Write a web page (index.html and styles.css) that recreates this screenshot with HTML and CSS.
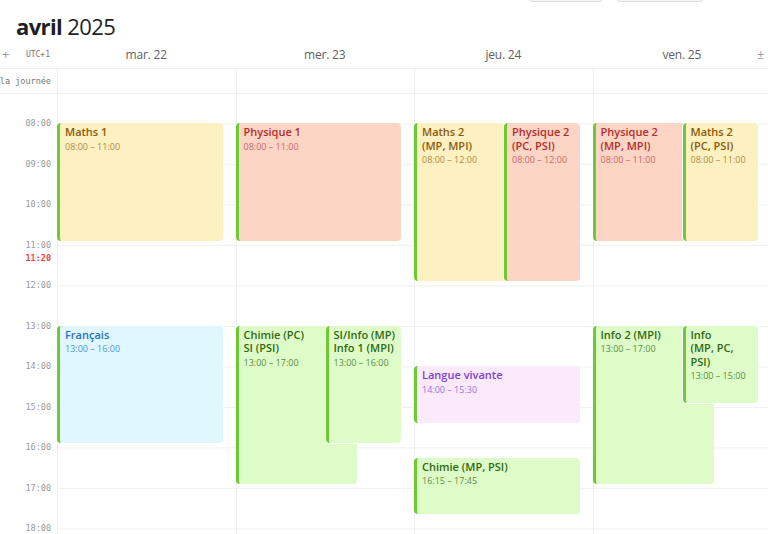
FILE: index.html
```html
<!DOCTYPE html>
<html lang="fr">
<head>
    <meta charset="UTF-8">
    <meta name="viewport" content="width=device-width, initial-scale=1.0">
    <title>Emploi du temps</title>
    <link rel="stylesheet" href="styles.css">
</head>
<body>
    <div class="calendar">
        <!-- Title + view buttons -->
        <div class="toolbar">
            <h1><strong>avril</strong> 2025</h1>
            <div class="view-buttons">
                <button class="btn-a"></button>
                <button class="btn-b"></button>
            </div>
        </div>

        <!-- Day names -->
        <div class="day-header">
            <div class="gutter-head">
                <span class="add">+</span>
                <span class="tz">UTC+1</span>
            </div>
            <div class="day-name">mar. 22</div>
            <div class="day-name">mer. 23</div>
            <div class="day-name">jeu. 24</div>
            <div class="day-name">ven. 25</div>
            <span class="zoom-toggle">±</span>
        </div>

        <!-- All day row -->
        <div class="allday-row">
            <div class="allday-label">Toute la journée</div>
            <div class="allday-cell"></div>
            <div class="allday-cell"></div>
            <div class="allday-cell"></div>
            <div class="allday-cell"></div>
        </div>

        <!-- Time grid -->
        <div class="time-grid">
            <div class="gutter">
                <div class="hour"><span>08:00</span></div>
                <div class="hour"><span>09:00</span></div>
                <div class="hour"><span>10:00</span></div>
                <div class="hour"><span>11:00</span><span class="now">11:20</span></div>
                <div class="hour"><span>12:00</span></div>
                <div class="hour"><span>13:00</span></div>
                <div class="hour"><span>14:00</span></div>
                <div class="hour"><span>15:00</span></div>
                <div class="hour"><span>16:00</span></div>
                <div class="hour"><span>17:00</span></div>
                <div class="hour"><span>18:00</span></div>
            </div>

            <!-- mar. 22 -->
            <div class="day">
                <div class="event maths full" style="top: 29.4px; height: 117.5px;">
                    <div class="ev-title">Maths 1</div>
                    <div class="ev-time">08:00 – 11:00</div>
                </div>
                <div class="event francais full" style="top: 231.9px; height: 117.5px;">
                    <div class="ev-title">Français</div>
                    <div class="ev-time">13:00 – 16:00</div>
                </div>
            </div>

            <!-- mer. 23 -->
            <div class="day">
                <div class="event physique full" style="top: 29.4px; height: 117.5px;">
                    <div class="ev-title">Physique 1</div>
                    <div class="ev-time">08:00 – 11:00</div>
                </div>
                <div class="event sci first" style="top: 231.9px; height: 158px;">
                    <div class="ev-title">Chimie (PC)<br>SI (PSI)</div>
                    <div class="ev-time">13:00 – 17:00</div>
                </div>
                <div class="event sci second" style="top: 231.9px; height: 117.5px;">
                    <div class="ev-title">SI/Info (MP)<br>Info 1 (MPI)</div>
                    <div class="ev-time">13:00 – 16:00</div>
                </div>
            </div>

            <!-- jeu. 24 -->
            <div class="day">
                <div class="event maths first" style="top: 29.4px; height: 158px;">
                    <div class="ev-title">Maths 2<br>(MP, MPI)</div>
                    <div class="ev-time">08:00 – 12:00</div>
                </div>
                <div class="event physique second" style="top: 29.4px; height: 158px;">
                    <div class="ev-title">Physique 2<br>(PC, PSI)</div>
                    <div class="ev-time">08:00 – 12:00</div>
                </div>
                <div class="event langue full" style="top: 272.4px; height: 56.75px;">
                    <div class="ev-title">Langue vivante</div>
                    <div class="ev-time">14:00 – 15:30</div>
                </div>
                <div class="event sci full" style="top: 363.5px; height: 56.75px;">
                    <div class="ev-title">Chimie (MP, PSI)</div>
                    <div class="ev-time">16:15 – 17:45</div>
                </div>
            </div>

            <!-- ven. 25 -->
            <div class="day">
                <div class="event physique first" style="top: 29.4px; height: 117.5px;">
                    <div class="ev-title">Physique 2<br>(MP, MPI)</div>
                    <div class="ev-time">08:00 – 11:00</div>
                </div>
                <div class="event maths second" style="top: 29.4px; height: 117.5px;">
                    <div class="ev-title">Maths 2<br>(PC, PSI)</div>
                    <div class="ev-time">08:00 – 11:00</div>
                </div>
                <div class="event sci first" style="top: 231.9px; height: 158px;">
                    <div class="ev-title">Info 2 (MPI)</div>
                    <div class="ev-time">13:00 – 17:00</div>
                </div>
                <div class="event sci second" style="top: 231.9px; height: 77px;">
                    <div class="ev-title">Info<br>(MP, PC,<br>PSI)</div>
                    <div class="ev-time">13:00 – 15:00</div>
                </div>
            </div>
        </div>
    </div>
</body>
</html>
```

FILE: styles.css
```css
:root {
    --gutter-width: 57px;
    --hour-height: 40.5px;
    --first-hour: 29.4px; /* offset of the 08:00 line */
    --line: #f0f0f0;
}

body {
    margin: 0;
    font-family: "Open Sans", "Noto Sans", sans-serif;
    background: #ffffff;
    overflow: hidden;
}

.calendar {
    width: 771px;
    color: #333;
}

.toolbar {
    display: flex;
    height: 40px;
}

.toolbar h1 {
    flex: 1;
    margin: 12px 0 0 16px;
    font-size: 22px;
    line-height: 28px;
    font-weight: 400;
    letter-spacing: -0.6px;
    color: #1f1f1f;
}

.toolbar h1 strong {
    font-weight: 700;
}

.view-buttons {
    display: flex;
    gap: 13px;
    margin-right: 67px;
    margin-top: -26px;
}

.view-buttons button {
    height: 28px;
    border: 1px solid #dcdcdc;
    border-radius: 4px;
    background: #f6f6f6;
}

.btn-a {
    width: 74px;
}

.btn-b {
    width: 88px;
}

.day-header {
    position: relative;
    display: grid;
    grid-template-columns: var(--gutter-width) repeat(4, 1fr);
    height: 28px;
    border-bottom: 1px solid var(--line);
}

.gutter-head {
    display: flex;
    align-items: center;
    justify-content: space-between;
    padding: 0 7px 0 2px;
}

.gutter-head .add {
    font-size: 13px;
    color: #9a9a9a;
}

.gutter-head .tz {
    font-family: "DejaVu Sans Mono", monospace;
    font-size: 8px;
    color: #777;
}

.day-name {
    display: flex;
    align-items: center;
    justify-content: center;
    font-size: 12px;
    letter-spacing: -0.2px;
    color: #616161;
}

.zoom-toggle {
    position: absolute;
    top: 6px;
    right: 7px;
    font-size: 12px;
    color: #9a9a9a;
}

.allday-row {
    display: grid;
    grid-template-columns: var(--gutter-width) repeat(4, 1fr);
    height: 24px;
    border-bottom: 1px solid var(--line);
}

.allday-label {
    display: flex;
    align-items: center;
    justify-content: flex-end;
    padding-right: 6px;
    white-space: nowrap;
    font-family: "DejaVu Sans Mono", monospace;
    font-size: 8.5px;
    color: #777;
}

.allday-cell {
    border-left: 1px solid var(--line);
}

.time-grid {
    display: grid;
    grid-template-columns: var(--gutter-width) repeat(4, 1fr);
    height: 440px;
    overflow: hidden;
}

.gutter {
    padding-top: var(--first-hour);
}

.hour {
    position: relative;
    height: var(--hour-height);
}

.hour span {
    display: block;
    padding-right: 6px;
    text-align: right;
    font-family: "DejaVu Sans Mono", monospace;
    font-size: 8.5px;
    line-height: 12px;
    color: #9a9a9a;
    transform: translateY(-50%);
}

.hour .now {
    position: absolute;
    top: 13.5px;
    right: 0;
    color: #ef4444;
    font-weight: 700;
}

.day {
    position: relative;
    background-image:
        linear-gradient(to right, var(--line) 1px, transparent 1px),
        linear-gradient(var(--line) 1px, transparent 1px);
    background-size: 100% 100%, 100% var(--hour-height);
    background-position: 0 0, 0 var(--first-hour);
    background-repeat: no-repeat, repeat-y;
}

.event {
    position: absolute;
    box-sizing: border-box;
    padding: 2px 4px 0 5px;
    border-left: 3px solid #6ccb35;
    border-radius: 4px;
    overflow: hidden;
}

.event.full {
    left: 0;
    right: 13px;
}

.event.first {
    left: 0;
    right: 57px;
}

.event.second {
    left: 90px;
    right: 13px;
    box-shadow: 0 0 0 1px #ffffff;
}

.ev-title {
    font-size: 11px;
    font-weight: 600;
    line-height: 13.5px;
}

.ev-time {
    margin-top: 1px;
    font-size: 9px;
    line-height: 13px;
}

.maths {
    background: #fdf0c1;
    color: #8a5a0b;
}

.maths .ev-time {
    color: #b08b45;
}

.physique {
    background: #fdd5c4;
    color: #b42d2d;
}

.physique .ev-time {
    color: #c9676a;
}

.francais {
    background: #e1f7fe;
    color: #1f74c4;
}

.francais .ev-time {
    color: #4b98d7;
}

.sci {
    background: #ddfcc8;
    color: #2e6a10;
}

.sci .ev-time {
    color: #5e8c43;
}

.langue {
    background: #fbe9fc;
    color: #7c3fd6;
}

.langue .ev-time {
    color: #9c74d9;
}
```
